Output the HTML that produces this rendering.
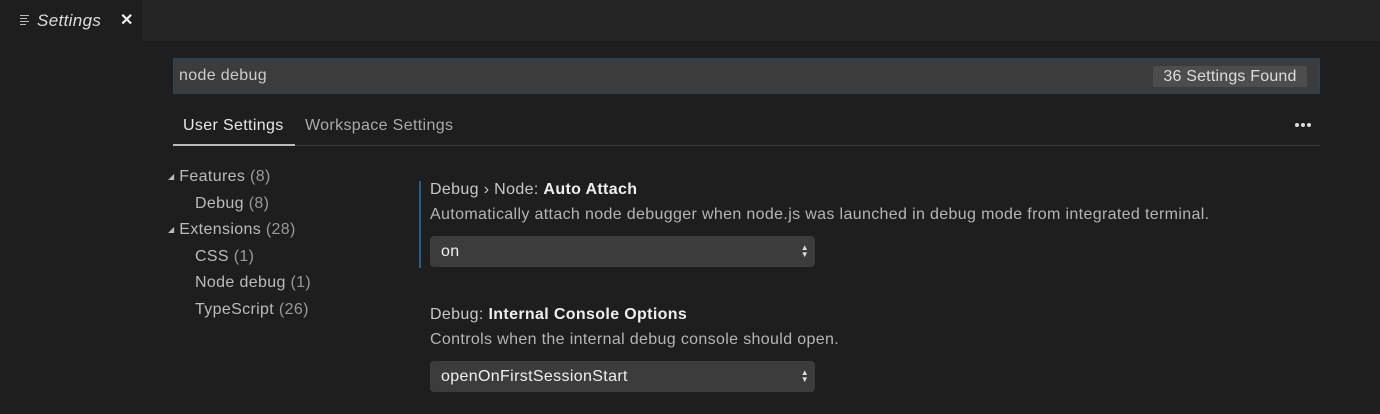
<!DOCTYPE html><html><head><style>
body{margin:0;width:1380px;height:414px;background:#1e1e1e;font-family:"Liberation Sans",sans-serif;overflow:hidden;position:relative;color:#ccc;letter-spacing:0.35px}
.a{position:absolute;white-space:nowrap}
.t{font-size:16px}
.sel{position:absolute;left:430px;width:385px;height:31px;background:#3c3c3c;border-radius:4px;font-size:16px;color:#f0f0f0}
.sel span{position:absolute;left:11px;top:7px}
.sel i{position:absolute;right:6px;top:8px;font-style:normal;font-size:8px;line-height:7px;color:#ddd}
.d{display:inline-block;width:4px;height:4px;border-radius:2px;background:#ddd;margin-right:2px}
</style></head><body>
<div class="a" style="left:142px;top:0;width:1238px;height:41px;background:#252526"></div>
<div class="a" style="left:20px;top:15px;width:10px;">
<div style="height:1px;background:#bbb;width:9px;margin-bottom:2px"></div><div style="height:1px;background:#bbb;width:7px;margin-bottom:2px"></div><div style="height:1px;background:#bbb;width:9px;margin-bottom:2px"></div><div style="height:1px;background:#bbb;width:6px"></div></div>
<div class="a" style="left:37px;top:11px;font-size:17px;font-style:italic;color:#ddd">Settings</div>
<div class="a" style="left:120px;top:10px;font-size:16px;font-weight:bold;color:#eee">✕</div>
<div class="a" style="left:173px;top:58px;width:1145px;height:34px;background:#3c3c3c;border:1px solid #1b4a68"></div>
<div class="a t" style="left:179px;top:67px;color:#ccc">node debug</div>
<div class="a" style="left:1153px;top:66px;width:154px;height:21px;background:#4d4d4d;border-radius:2px;font-size:16px;letter-spacing:0.2px;color:#ddd;text-align:center;line-height:21px">36 Settings Found</div>
<div class="a t" style="left:183px;top:117px;color:#e8e8e8">User Settings</div>
<div class="a t" style="left:305px;top:117px;color:#aaa">Workspace Settings</div>
<div class="a" style="left:1295px;top:121px;line-height:4px"><span class="d"></span><span class="d"></span><span class="d"></span></div>
<div class="a" style="left:173px;top:145px;width:1147px;height:1px;background:#3a3a3a"></div>
<div class="a" style="left:173px;top:144px;width:122px;height:2px;background:#bbb"></div>
<div class="a t" style="left:168px;top:164px;line-height:26.5px;color:#bbb">
<div><span style="font-size:8px;vertical-align:2px">◢</span> Features <span style="color:#999">(8)</span></div>
<div style="padding-left:27px">Debug <span style="color:#999">(8)</span></div>
<div><span style="font-size:8px;vertical-align:2px">◢</span> Extensions <span style="color:#999">(28)</span></div>
<div style="padding-left:27px">CSS <span style="color:#999">(1)</span></div>
<div style="padding-left:27px">Node debug <span style="color:#999">(1)</span></div>
<div style="padding-left:27px">TypeScript <span style="color:#999">(26)</span></div></div>
<div class="a" style="left:419px;top:181px;width:2px;height:87px;background:#1f5f8a"></div>
<div class="a t" style="left:430px;top:181px;color:#c8c8c8">Debug › Node: <b style="color:#eee">Auto Attach</b></div>
<div class="a t" style="left:430px;top:206px;color:#b5b5b5">Automatically attach node debugger when node.js was launched in debug mode from integrated terminal.</div>
<div class="sel" style="top:236px"><span>on</span><i>▲<br>▼</i></div>
<div class="a t" style="left:430px;top:306px;color:#c8c8c8">Debug: <b style="color:#eee">Internal Console Options</b></div>
<div class="a t" style="left:430px;top:331px;color:#b5b5b5">Controls when the internal debug console should open.</div>
<div class="sel" style="top:361px"><span>openOnFirstSessionStart</span><i>▲<br>▼</i></div>
</body></html>
